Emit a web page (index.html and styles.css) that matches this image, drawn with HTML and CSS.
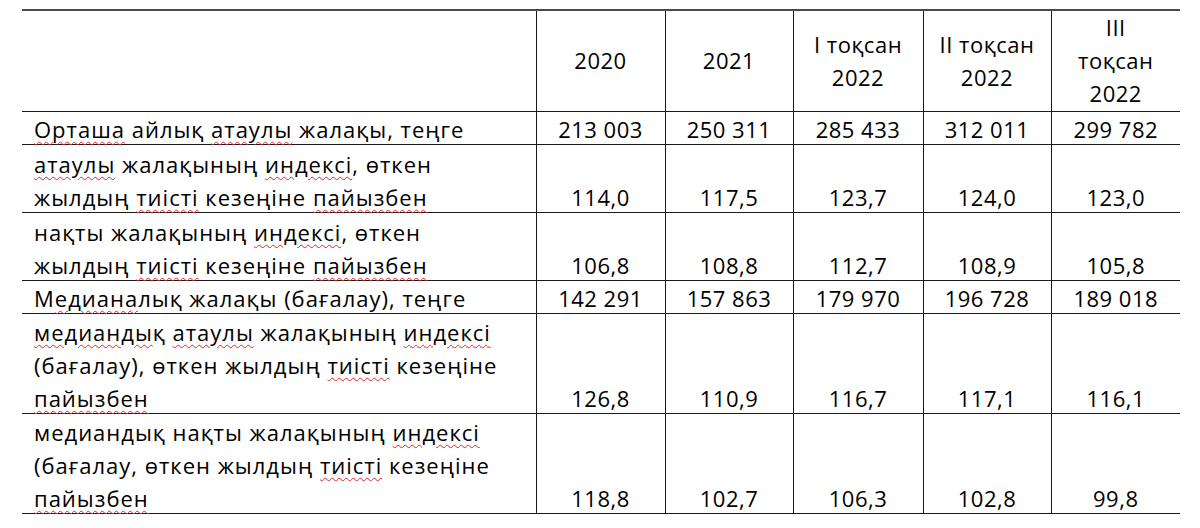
FILE: index.html
```html
<!DOCTYPE html>
<html lang="kk">
<head>
<meta charset="utf-8">
<title>Жалақы</title>
<link rel="stylesheet" href="styles.css">
</head>
<body>
<table class="wage-table">
  <colgroup>
    <col class="col-label">
    <col class="col-a">
    <col class="col-b">
    <col class="col-c">
    <col class="col-d">
    <col class="col-e">
  </colgroup>
  <thead>
    <tr class="row-head">
      <th class="label"></th>
      <th>2020</th>
      <th>2021</th>
      <th>I тоқсан<br>2022</th>
      <th>II тоқсан<br>2022</th>
      <th>III<br>тоқсан<br>2022</th>
    </tr>
  </thead>
  <tbody>
    <tr class="row-1">
      <td class="label"><div class="txt"><span class="sp">Орташа</span> айлық <span class="sp">атаулы</span> жалақы, теңге</div></td>
      <td><div class="txt">213 003</div></td>
      <td><div class="txt">250 311</div></td>
      <td><div class="txt">285 433</div></td>
      <td><div class="txt">312 011</div></td>
      <td><div class="txt">299 782</div></td>
    </tr>
    <tr class="row-2">
      <td class="label"><div class="txt"><span class="sp">атаулы</span> жалақының <span class="sp">индексі</span>, өткен<br>жылдың <span class="sp">тиісті</span> кезеңіне <span class="sp">пайызбен</span></div></td>
      <td><div class="txt">114,0</div></td>
      <td><div class="txt">117,5</div></td>
      <td><div class="txt">123,7</div></td>
      <td><div class="txt">124,0</div></td>
      <td><div class="txt">123,0</div></td>
    </tr>
    <tr class="row-2">
      <td class="label"><div class="txt">нақты жалақының <span class="sp">индексі</span>, өткен<br>жылдың <span class="sp">тиісті</span> кезеңіне <span class="sp">пайызбен</span></div></td>
      <td><div class="txt">106,8</div></td>
      <td><div class="txt">108,8</div></td>
      <td><div class="txt">112,7</div></td>
      <td><div class="txt">108,9</div></td>
      <td><div class="txt">105,8</div></td>
    </tr>
    <tr class="row-1">
      <td class="label"><div class="txt">М<span class="sp">едиана</span>лық жалақы (бағалау), теңге</div></td>
      <td><div class="txt">142 291</div></td>
      <td><div class="txt">157 863</div></td>
      <td><div class="txt">179 970</div></td>
      <td><div class="txt">196 728</div></td>
      <td><div class="txt">189 018</div></td>
    </tr>
    <tr class="row-3">
      <td class="label"><div class="txt"><span class="sp">медианды</span>қ <span class="sp">атаулы</span> жалақының <span class="sp">индексі</span><br>(бағалау), өткен жылдың <span class="sp">тиісті</span> кезеңіне<br><span class="sp">пайызбен</span></div></td>
      <td><div class="txt">126,8</div></td>
      <td><div class="txt">110,9</div></td>
      <td><div class="txt">116,7</div></td>
      <td><div class="txt">117,1</div></td>
      <td><div class="txt">116,1</div></td>
    </tr>
    <tr class="row-3">
      <td class="label"><div class="txt">медиандық нақты жалақының <span class="sp">индексі</span><br>(бағалау, өткен жылдың <span class="sp">тиісті</span> кезеңіне<br><span class="sp">пайызбен</span></div></td>
      <td><div class="txt">118,8</div></td>
      <td><div class="txt">102,7</div></td>
      <td><div class="txt">106,3</div></td>
      <td><div class="txt">102,8</div></td>
      <td><div class="txt">99,8</div></td>
    </tr>
  </tbody>
</table>
</body>
</html>
```

FILE: styles.css
```css
html, body {
  margin: 0;
  padding: 0;
  background: #ffffff;
}

body {
  font-family: "Open Sans", "Noto Sans", sans-serif;
  color: #000000;
}

.wage-table {
  border-collapse: collapse;
  table-layout: fixed;
  width: 1158px;
  margin: 9px 0 0 22px;
  font-size: 22px;
  letter-spacing: 0.5px;
  line-height: 33px;
}

.col-label { width: 514px; }
.col-a { width: 129px; }
.col-b { width: 128px; }
.col-c { width: 130px; }
.col-d { width: 128px; }
.col-e { width: 129px; }

.wage-table th,
.wage-table td {
  padding: 0;
  border-left: 1px solid #1a1a1a;
  border-bottom: 1px solid #1a1a1a;
  text-align: center;
  vertical-align: bottom;
  font-weight: normal;
}

.wage-table th {
  vertical-align: middle;
  border-top: 2px solid #4a4a4a;
}

.wage-table .label {
  border-left: none;
  text-align: left;
  padding-left: 12px;
  letter-spacing: 1px;
}

.row-head { height: 101px; }
.row-1 { height: 33px; }
.row-2 { height: 68px; }
.row-3 { height: 100px; }

.txt {
  margin-bottom: -2px;
  white-space: nowrap;
}

.sp {
  text-decoration-line: underline;
  text-decoration-style: wavy;
  text-decoration-color: #e0262b;
  text-decoration-thickness: 1px;
  text-underline-offset: 3px;
}
```
